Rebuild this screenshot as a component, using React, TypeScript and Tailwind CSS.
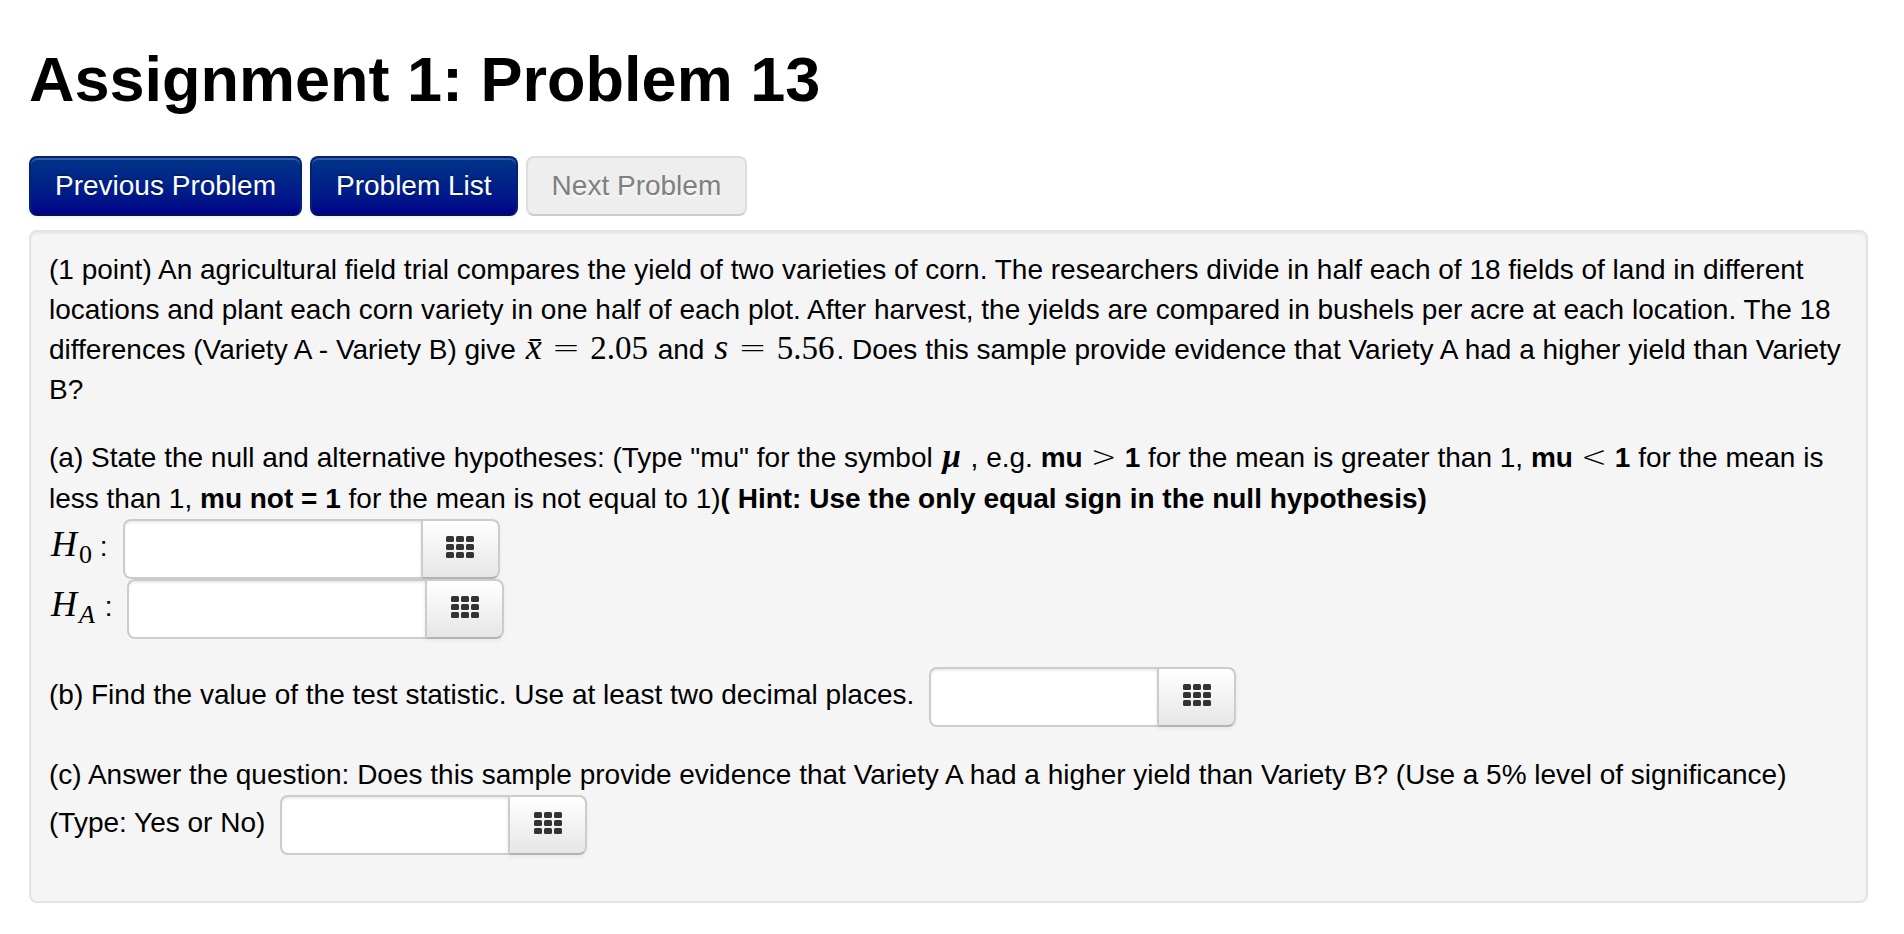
import type { ReactNode } from 'react'

const keypadCells = [0, 1, 2].flatMap(row => [0, 1, 2].map(col => ({ x: col * 10, y: row * 8 })))

function KeypadIcon() {
  return (
    <svg width="28" height="22" viewBox="0 0 28 22" fill="#333333" aria-hidden="true">
      {keypadCells.map(c => (
        <rect key={`${c.x}-${c.y}`} x={c.x} y={c.y} width="8" height="6" rx="1.5" />
      ))}
    </svg>
  )
}

// math spans use a zero line height so they never stretch the line they sit in
function Num({ children }: { children: ReactNode }) {
  return <span className="mx-0.5 font-['Liberation_Serif',serif] text-[33px] leading-[0]">{children}</span>
}

function Sym({ children }: { children: ReactNode }) {
  return <span className="mx-0.5 font-['Liberation_Serif',serif] text-[36px] leading-[0] italic">{children}</span>
}

function Equals() {
  return <span className="mx-2 font-['DejaVu_Sans',sans-serif] text-[34px] leading-[0] font-extralight">=</span>
}

function Compare({ children }: { children: ReactNode }) {
  return (
    <span className="mx-2 font-['DejaVu_Sans',sans-serif] text-[31px] leading-[0] font-extralight">{children}</span>
  )
}

function AnswerField({ id, label, wide }: { id: string; label: ReactNode; wide?: boolean }) {
  return (
    <div className="flex items-start">
      <label htmlFor={id} className="mr-[15px] pt-2 leading-10">
        {label}
      </label>
      <input
        id={id}
        type="text"
        className={`${wide ? 'w-[298px]' : 'w-[228px]'} h-[60px] rounded-l-lg border-2 border-r-0 border-[#cccccc] bg-white px-3 shadow-[inset_0_2px_2px_rgba(0,0,0,0.075)] outline-none`}
      />
      <button
        type="button"
        aria-label="Open equation editor"
        className="flex h-[60px] w-[79px] items-center justify-center rounded-r-lg border-2 border-[#cccccc] border-b-[#b3b3b3] bg-linear-to-b from-white to-[#e6e6e6] pb-1 shadow-[0_2px_4px_rgba(0,0,0,0.05)]"
      >
        <KeypadIcon />
      </button>
    </div>
  )
}

const navButton =
  'h-[60px] rounded-lg border-2 border-[#002277] border-b-[#001155] bg-linear-to-b from-[#003388] to-[#000088] px-6 text-white shadow-[inset_0_2px_0_rgba(255,255,255,0.2),0_2px_4px_rgba(0,0,0,0.05)] [text-shadow:0_-2px_0_rgba(0,0,0,0.25)]'

export default function App() {
  return (
    <div className="px-[29px] pt-[39px] pr-9 font-['Liberation_Sans',Arial,sans-serif] text-[28px] leading-10 text-black">
      <h1 className="text-[63px] leading-20 font-bold">Assignment 1: Problem 13</h1>

      <nav className="mt-[37px] flex gap-2">
        <button type="button" className={navButton}>
          Previous Problem
        </button>
        <button type="button" className={navButton}>
          Problem List
        </button>
        <button
          type="button"
          disabled
          className="h-[60px] rounded-lg border-2 border-[#dddddd] border-b-[#cccccc] bg-[#eeeeee] px-6 text-[#808080] [text-shadow:0_2px_2px_rgba(255,255,255,0.75)]"
        >
          Next Problem
        </button>
      </nav>

      <main className="mt-3.5 rounded-lg border-2 border-[#e3e3e3] bg-[#f5f5f5] px-[18px] pt-[18px] pb-[46px] shadow-[inset_0_2px_2px_rgba(0,0,0,0.05)]">
        <p>
          (1 point) An agricultural field trial compares the yield of two varieties of corn. The researchers divide in
          half each of 18 fields of land in different locations and plant each corn variety in one half of each plot.
          After harvest, the yields are compared in bushels per acre at each location. The 18 differences (Variety A -
          Variety B) give <Sym>x̄</Sym>
          <Equals />
          <Num>2.05</Num> and <Sym>s</Sym>
          <Equals />
          <Num>5.56</Num>. Does this sample provide evidence that Variety A had a higher yield than Variety B?
        </p>

        <p className="mt-[27px] leading-[41px]">
          (a) State the null and alternative hypotheses: (Type "mu" for the symbol{' '}
          <b className="mx-0.5 font-['Liberation_Serif',serif] text-[33px] leading-[0] italic">μ</b> , e.g. <b>mu</b>
          <Compare>&gt;</Compare>
          <b>1</b> for the mean is greater than 1, <b>mu</b>
          <Compare>&lt;</Compare>
          <b>1</b> for the mean is less than 1, <b>mu not = 1</b> for the mean is not equal to 1)
          <b>( Hint: Use the only equal sign in the null hypothesis)</b>
        </p>

        <AnswerField
          id="null-hypothesis"
          wide
          label={
            <>
              <Sym>H</Sym>
              <sub className="font-['Liberation_Serif',serif] text-[26px] leading-[0]">0</sub> :
            </>
          }
        />
        <AnswerField
          id="alternative-hypothesis"
          wide
          label={
            <>
              <Sym>H</Sym>
              <sub className="mr-0.5 font-['Liberation_Serif',serif] text-[26px] leading-[0] italic">A</sub> :
            </>
          }
        />

        <div className="mt-7">
          <AnswerField
            id="test-statistic"
            label="(b) Find the value of the test statistic. Use at least two decimal places."
          />
        </div>

        <p className="mt-7">
          (c) Answer the question: Does this sample provide evidence that Variety A had a higher yield than Variety B?
          (Use a 5% level of significance)
        </p>
        <AnswerField id="conclusion" label="(Type: Yes or No)" />
      </main>
    </div>
  )
}
